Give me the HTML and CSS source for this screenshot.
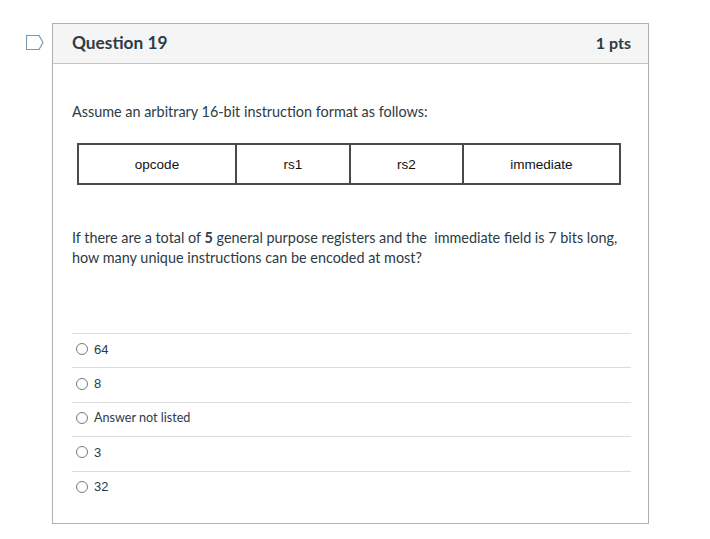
FILE: index.html
```html
<!DOCTYPE html>
<html>
<head>
<meta charset="utf-8">
<link rel="stylesheet" href="styles.css">
</head>
<body>
<div class="page">
  <div class="flag">
    <svg width="18" height="15" viewBox="0 0 18 15"><path d="M0.5 0.5 H13 L17 7.5 L13 14.5 H0.5 Z" fill="none" stroke="#7a98b6" stroke-width="1.2" stroke-linejoin="round"/></svg>
  </div>
  <div class="card">
    <div class="header">
      <span class="title">Question 19</span>
      <span class="pts">1 pts</span>
    </div>
    <div class="body">
      <p class="text">Assume an arbitrary 16-bit instruction format as follows:</p>
      <div class="format">
        <div class="cell c-op">opcode</div>
        <div class="cell c-rs1">rs1</div>
        <div class="cell c-rs2">rs2</div>
        <div class="cell c-imm">immediate</div>
      </div>
      <p class="text q2">If there are a total of <b>5</b> general purpose registers and the &nbsp;immediate field is 7 bits long, how many unique instructions can be encoded at most?</p>
      <div class="answers">
        <div class="answer"><span class="radio"></span><span class="label num">64</span></div>
        <div class="answer"><span class="radio"></span><span class="label num">8</span></div>
        <div class="answer"><span class="radio"></span><span class="label">Answer not listed</span></div>
        <div class="answer"><span class="radio"></span><span class="label num">3</span></div>
        <div class="answer"><span class="radio"></span><span class="label num">32</span></div>
      </div>
    </div>
  </div>
</div>
</body>
</html>
```
FILE: styles.css
```css
html, body {
  margin: 0;
  padding: 0;
  background: #ffffff;
}
body {
  font-family: Lato, "Liberation Sans", sans-serif;
  color: #2d3b45;
}
.page {
  display: flex;
  align-items: flex-start;
  padding: 23px 0 0 26px;
}
.flag {
  width: 26px;
  padding-top: 12px;
  line-height: 0;
}
.card {
  width: 595px;
  border: 1px solid #b0b0b0;
}
.header {
  display: flex;
  justify-content: space-between;
  align-items: center;
  background: #f5f5f5;
  border-bottom: 1px solid #c4c4c4;
  padding: 0 17px 2px 19px;
  box-sizing: border-box;
  height: 40px;
  font-weight: bold;
  font-size: 17.3px;
}
.pts {
  font-size: 16px;
}
.body {
  padding: 38px 17px 18px 19px;
}
.text {
  margin: 0;
  font-size: 14.4px;
  line-height: 20px;
}
.format {
  display: flex;
  width: 544px;
  height: 42px;
  margin: 21px 0 0 5px;
  border: 2px solid #4a4a4a;
  box-sizing: border-box;
  font-family: "Liberation Sans", Arial, sans-serif;
  font-size: 13.5px;
  color: #111;
}
.cell {
  display: flex;
  align-items: center;
  justify-content: center;
  border-left: 2px solid #4a4a4a;
  box-sizing: border-box;
}
.cell:first-child {
  border-left: none;
}
.c-op { width: 156px; }
.c-rs1 { width: 114px; }
.c-rs2 { width: 113px; }
.c-imm { flex: 1; }
.q2 {
  margin-top: 43px;
}
.answers {
  margin-top: 65px;
}
.answer {
  display: flex;
  align-items: center;
  height: 34.4px;
  box-sizing: border-box;
  border-top: 1px solid #dcdcdc;
  padding: 0 0 3px 4px;
  font-size: 12.6px;
}
.radio {
  width: 10px;
  height: 10px;
  border: 1px solid #7a7a7a;
  border-radius: 50%;
  margin: 0 6px 0 0;
  flex: none;
}
.label.num {
  font-family: "Liberation Sans", Arial, sans-serif;
  font-size: 13px;
}
```
